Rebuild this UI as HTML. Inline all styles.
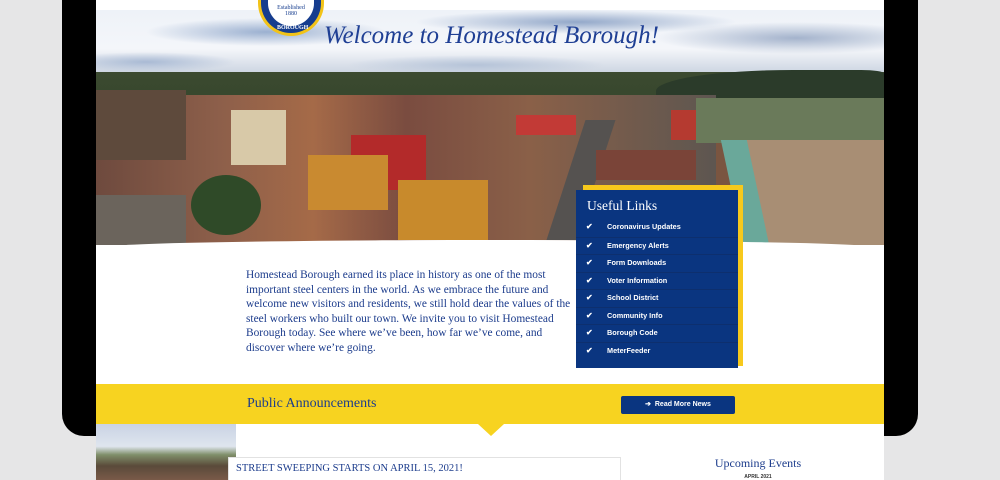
<!DOCTYPE html>
<html><head><meta charset="utf-8"><style>
*{margin:0;padding:0;box-sizing:border-box}
body{width:1000px;height:480px;background:#e6e6e7;position:relative;overflow:hidden;font-family:"Liberation Serif",serif}
.frame{position:absolute;left:62px;top:-30px;width:856px;height:466px;background:#000;border-radius:0 0 22px 22px}
.screen{position:absolute;left:96px;top:0;width:788px;height:480px;background:#fff;overflow:hidden}
.a{position:absolute}
.hero{position:absolute;left:0;top:10px;width:788px;height:235px;overflow:hidden;background:#7a5540}
.t{position:absolute;left:150px;top:268px;width:325px;color:#1c3c8c;font-size:11.4px;line-height:14.6px}
.links{position:absolute;left:480px;top:190px;width:162px;height:178px;background:#0a3580}
.links h3{font-weight:normal;color:#fff;font-size:13.5px;position:absolute;left:11px;top:8px}
.links ul{list-style:none;position:absolute;top:29px;left:0;width:162px}
.links li{height:17.5px;font:bold 7.3px "Liberation Sans",sans-serif;color:#fff;line-height:15px;padding-left:31px;position:relative;border-top:1px solid #0d2f6e}
.links li:first-child{border-top:none}
.links li:before{content:"✔";position:absolute;left:10px;top:0;font-size:8px}
.band{position:absolute;left:0;top:384px;width:788px;height:40px;background:#f7d320}
</style></head><body>
<div class="frame"></div>
<div class="screen">
 <div class="hero">
  <div class="a" style="left:0;top:0;width:788px;height:65px;background:linear-gradient(180deg,#eef2f8,#f4f6fa 60%,#c9d2df);"></div>
  <div class="a" style="left:0;top:0;width:788px;height:65px;background:radial-gradient(ellipse 120px 14px at 170px 22px,#9bb0d0,transparent),radial-gradient(ellipse 160px 12px at 480px 12px,#93a8c9,transparent),radial-gradient(ellipse 140px 16px at 700px 28px,#a4b3cc,transparent),radial-gradient(ellipse 90px 10px at 50px 52px,#a9bad4,transparent),radial-gradient(ellipse 130px 10px at 380px 55px,#b5c3d8,transparent)"></div>
  <div class="a" style="left:0;top:62px;width:788px;height:40px;background:linear-gradient(180deg,#3c4a30,#34462c)"></div>
  <div class="a" style="left:560px;top:60px;width:228px;height:35px;background:#2b3b2a;border-radius:60% 10% 0 0"></div>
  <div class="a" style="left:0;top:85px;width:620px;height:150px;background:linear-gradient(90deg,#6e4a3e,#8d5f4a 20%,#a56a48 35%,#7a4c40 50%,#8a6048 70%,#5d5650)"></div>
  <div class="a" style="left:0;top:80px;width:90px;height:70px;background:#5e4a3c"></div>
  <div class="a" style="left:135px;top:100px;width:55px;height:55px;background:#d8c9a8"></div>
  <div class="a" style="left:255px;top:125px;width:75px;height:55px;background:#b32a2a"></div>
  <div class="a" style="left:212px;top:145px;width:80px;height:55px;background:#c98a30"></div>
  <div class="a" style="left:302px;top:170px;width:90px;height:60px;background:#c88a2c"></div>
  <div class="a" style="left:95px;top:165px;width:70px;height:60px;background:#2f4a28;border-radius:50%"></div>
  <div class="a" style="left:0;top:185px;width:90px;height:50px;background:#6b645c"></div>
  <div class="a" style="left:420px;top:105px;width:60px;height:20px;background:#c23a36"></div>
  <div class="a" style="left:470px;top:110px;width:30px;height:120px;background:#555250;transform:skewX(-18deg)"></div>
  <div class="a" style="left:500px;top:140px;width:100px;height:30px;background:#7a4438"></div>
  <div class="a" style="left:575px;top:100px;width:40px;height:30px;background:#b53a30"></div>
  <div class="a" style="left:600px;top:88px;width:188px;height:45px;background:#6a7a5a"></div>
  <div class="a" style="left:636px;top:130px;width:152px;height:105px;background:#a88e74"></div>
  <div class="a" style="left:636px;top:130px;width:26px;height:105px;background:#6aa89a;transform:skewX(12deg)"></div>
  <div class="a" style="left:0;top:230px;width:788px;height:8px;background:#fff;border-radius:50% 50% 0 0/100% 100% 0 0"></div>
 </div>
 <div class="a" style="left:162px;top:-20px;width:66px;height:56px;border-radius:0 0 33px 33px;background:#f2c318"></div>
 <div class="a" style="left:165px;top:-18px;width:60px;height:51px;border-radius:0 0 30px 30px;background:#163d8e"></div>
 <div class="a" style="left:172px;top:-14px;width:46px;height:40px;border-radius:0 0 23px 23px;background:#fff;text-align:center;font-size:6px;color:#163d8e;padding-top:19px;line-height:6px">Established<br>1880</div>
 <div class="a" style="left:181px;top:25px;font:bold 6px 'Liberation Serif',serif;color:#fff">BOROUGH</div>
 <div class="a" style="left:228px;top:22px;font:italic 25px 'Liberation Serif',serif;color:#1f3f94">Welcome to Homestead Borough!</div>
 <div class="t">Homestead Borough earned its place in history as one of the most important steel centers in the world. As we embrace the future and welcome new visitors and residents, we still hold dear the values of the steel workers who built our town. We invite you to visit Homestead Borough today. See where we’ve been, how far we’ve come, and discover where we’re going.</div>
 <div class="a" style="left:487px;top:185px;width:160px;height:181px;background:#f7c91c"></div>
 <div class="links"><h3>Useful Links</h3><ul>
  <li>Coronavirus Updates</li><li>Emergency Alerts</li><li>Form Downloads</li><li>Voter Information</li><li>School District</li><li>Community Info</li><li>Borough Code</li><li>MeterFeeder</li></ul></div>
 <div class="band"></div>
 <div class="a" style="left:382px;top:424px;width:0;height:0;border-left:13px solid transparent;border-right:13px solid transparent;border-top:12px solid #f7d320"></div>
 <div class="a" style="left:151px;top:396px;font-size:14px;color:#1c3c8c">Public Announcements</div>
 <div class="a" style="left:525px;top:396px;width:114px;height:18px;background:#0a3580;border-radius:2px;color:#fff;font:bold 7px 'Liberation Sans',sans-serif;text-align:center;line-height:18px">➔ &nbsp;Read More News</div>
 <div class="a" style="left:0;top:424px;width:140px;height:56px;background:linear-gradient(180deg,#c9d3e4 0,#dfe5ee 40%,#7f8f6a 55%,#5a4a3a 75%,#7a5a48)"></div>
 <div class="a" style="left:132px;top:457px;width:393px;height:30px;background:#fff;border:1px solid #e2e2e2"></div>
 <div class="a" style="left:140px;top:463px;font-size:10.5px;color:#1c3c8c">STREET SWEEPING STARTS ON APRIL 15, 2021!</div>
 <div class="a" style="left:604px;top:456px;width:116px;text-align:center;font-size:12px;color:#1c3c8c">Upcoming Events</div>
 <div class="a" style="left:604px;top:474px;width:116px;text-align:center;font:bold 5px 'Liberation Sans',sans-serif;color:#333">APRIL 2021</div>
</div>
</body></html>
